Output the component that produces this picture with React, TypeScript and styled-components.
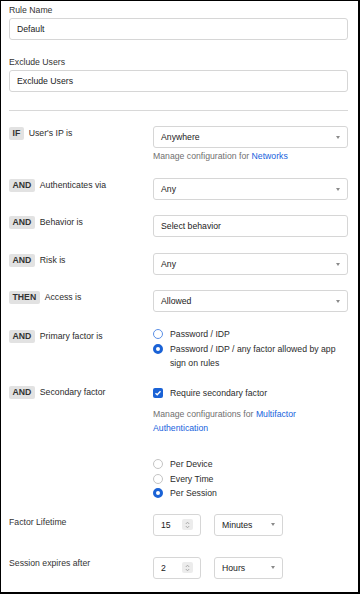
import styled, { createGlobalStyle } from "styled-components";

const GlobalStyle = createGlobalStyle`
  * { box-sizing: border-box; }
  body {
    margin: 0;
    background: #fff;
    font-family: "Liberation Sans", Arial, sans-serif;
    font-size: 8.7px;
    color: #2b2b2b;
  }
`;

const Panel = styled.div`
  width: 360px;
  height: 594px;
  border: 1px solid #000;
  border-right-width: 2px;
  border-bottom-width: 2px;
  padding: 3px 10px 0 8px;
  overflow: hidden;
`;

const FieldLabel = styled.div<{ $top?: number }>`
  line-height: 12px;
  margin-top: ${(p) => p.$top ?? 0}px;
  margin-bottom: 2px;
  color: #333;
`;

const TextBox = styled.div<{ $width?: number }>`
  height: 22px;
  width: ${(p) => (p.$width ? `${p.$width}px` : "100%")};
  border: 1px solid #d6d6d6;
  border-radius: 3px;
  background: #fff;
  display: flex;
  align-items: center;
  justify-content: space-between;
  padding: 0 7px;
  color: #222;
`;

const Divider = styled.div`
  height: 1px;
  background: #d8d8d8;
  margin-top: 18px;
`;

const Row = styled.div<{ $top: number }>`
  display: grid;
  grid-template-columns: 144px 1fr;
  align-items: start;
  margin-top: ${(p) => p.$top}px;
`;

const Cond = styled.div<{ $pad?: number }>`
  display: flex;
  align-items: center;
  gap: 5px;
  padding-top: ${(p) => p.$pad ?? 1}px;
  line-height: 13px;
`;

const Badge = styled.span`
  display: inline-block;
  height: 13px;
  line-height: 13px;
  padding: 0 3.5px;
  background: #e2e2e2;
  border-radius: 2px;
  font-weight: bold;
  color: #333;
`;

const Caret = styled.span`
  width: 0;
  height: 0;
  border-left: 2px solid transparent;
  border-right: 2px solid transparent;
  border-top: 3px solid #8a8a8a;
`;

const Help = styled.div<{ $top: number; $lh?: number }>`
  margin-top: ${(p) => p.$top}px;
  line-height: ${(p) => p.$lh ?? 12}px;
  color: #707070;
`;

const Link = styled.a`
  color: #1662dd;
  text-decoration: none;
`;

const Options = styled.div<{ $top?: number }>`
  display: flex;
  flex-direction: column;
  line-height: 14.5px;
  margin-top: ${(p) => p.$top ?? 0}px;
`;

const Option = styled.label`
  display: grid;
  grid-template-columns: 10px 1fr;
  column-gap: 7px;
  align-items: start;
  color: #2b2b2b;
`;

const Radio = styled.span<{ $on?: boolean; $tone?: "blue" | "gray" }>`
  width: 10px;
  height: 10px;
  margin-top: 2.25px;
  border-radius: 50%;
  background: #fff;
  border: ${(p) =>
    p.$on
      ? "3.3px solid #1a62d6"
      : p.$tone === "blue"
      ? "1px solid #5a8fe6"
      : "1px solid #c4c4c4"};
`;

const Check = styled.span`
  width: 10px;
  height: 10px;
  margin-top: 2px;
  border-radius: 2px;
  background: #1a62d6;
  display: flex;
  align-items: center;
  justify-content: center;
`;

const Inline = styled.div`
  display: flex;
  gap: 13px;
`;

const Spinner = styled.span`
  width: 11px;
  height: 11px;
  background: #ececec;
  border-radius: 2px;
  display: flex;
  align-items: center;
  justify-content: center;
`;

const Plain = styled.div<{ $pad?: number }>`
  padding-top: ${(p) => p.$pad ?? 0}px;
  line-height: 12px;
  color: #333;
`;

function Select({ value, width }: { value: string; width?: number }) {
  return (
    <TextBox $width={width}>
      <span>{value}</span>
      <Caret />
    </TextBox>
  );
}

function NumberBox({ value }: { value: string }) {
  return (
    <TextBox $width={48}>
      <span>{value}</span>
      <Spinner>
        <svg width="5" height="8" viewBox="0 0 5 8">
          <path d="M0.8 3 L2.5 1.2 L4.2 3 M0.8 5 L2.5 6.8 L4.2 5" fill="none" stroke="#9a9a9a" strokeWidth="0.8" />
        </svg>
      </Spinner>
    </TextBox>
  );
}

export default function App() {
  return (
    <>
      <GlobalStyle />
      <Panel>
        <FieldLabel>Rule Name</FieldLabel>
        <TextBox>Default</TextBox>
        <FieldLabel $top={16}>Exclude Users</FieldLabel>
        <TextBox>Exclude Users</TextBox>
        <Divider />

        <Row $top={15}>
          <Cond>
            <Badge>IF</Badge>User's IP is
          </Cond>
          <div>
            <Select value="Anywhere" />
            <Help $top={2}>
              Manage configuration for <Link>Networks</Link>
            </Help>
          </div>
        </Row>

        <Row $top={16}>
          <Cond>
            <Badge>AND</Badge>Authenticates via
          </Cond>
          <Select value="Any" />
        </Row>

        <Row $top={15}>
          <Cond>
            <Badge>AND</Badge>Behavior is
          </Cond>
          <TextBox>Select behavior</TextBox>
        </Row>

        <Row $top={16}>
          <Cond>
            <Badge>AND</Badge>Risk is
          </Cond>
          <Select value="Any" />
        </Row>

        <Row $top={15}>
          <Cond>
            <Badge>THEN</Badge>Access is
          </Cond>
          <Select value="Allowed" />
        </Row>

        <Row $top={15}>
          <Cond $pad={2.5}>
            <Badge>AND</Badge>Primary factor is
          </Cond>
          <Options>
            <Option>
              <Radio $tone="blue" />
              <span>Password / IDP</span>
            </Option>
            <Option>
              <Radio $on />
              <span>Password / IDP / any factor allowed by app sign on rules</span>
            </Option>
          </Options>
        </Row>

        <Row $top={15}>
          <Cond $pad={0.5}>
            <Badge>AND</Badge>Secondary factor
          </Cond>
          <div>
            <Options>
              <Option>
                <Check>
                  <svg width="8" height="8" viewBox="0 0 8 8">
                    <path d="M1.5 4.2 L3.2 5.8 L6.5 2.2" fill="none" stroke="#fff" strokeWidth="1.4" />
                  </svg>
                </Check>
                <span>Require secondary factor</span>
              </Option>
            </Options>
            <Help $top={7} $lh={14}>
              Manage configurations for <Link>Multifactor</Link>
              <br />
              <Link>Authentication</Link>
            </Help>
            <Options $top={22}>
              <Option>
                <Radio />
                <span>Per Device</span>
              </Option>
              <Option>
                <Radio />
                <span>Every Time</span>
              </Option>
              <Option>
                <Radio $on />
                <span>Per Session</span>
              </Option>
            </Options>
          </div>
        </Row>

        <Row $top={13}>
          <Plain $pad={2}>Factor Lifetime</Plain>
          <Inline>
            <NumberBox value="15" />
            <Select value="Minutes" width={69} />
          </Inline>
        </Row>

        <Row $top={21}>
          <Plain $pad={0}>Session expires after</Plain>
          <Inline>
            <NumberBox value="2" />
            <Select value="Hours" width={69} />
          </Inline>
        </Row>
      </Panel>
    </>
  );
}
